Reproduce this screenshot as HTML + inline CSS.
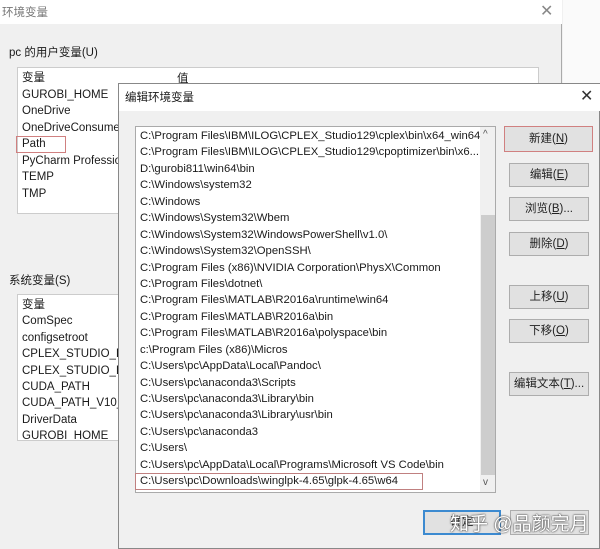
<!DOCTYPE html>
<html><head><meta charset="utf-8"><style>
*{margin:0;padding:0;box-sizing:border-box}
body{width:600px;height:549px;overflow:hidden;background:#f0f0f0;font-family:"Liberation Sans","Noto Sans CJK SC",sans-serif;font-size:11.5px;color:#1a1a1a;position:relative}
.a{position:absolute;white-space:nowrap}
.btn{position:absolute;background:#e1e1e1;border:1px solid #adadad;text-align:center;font-size:11.5px;line-height:22px;color:#222}
</style></head><body>
<div class="a" style="left:0;top:0;width:562px;height:549px;background:#f0f0f0;border-right:1px solid #aaa"></div>
<div class="a" style="left:563px;top:0;width:37px;height:549px;background:#fafafa"></div>
<div class="a" style="left:0;top:0;width:562px;height:24px;background:#fff"></div>
<div class="a" style="left:2px;top:4px;color:#777">环境变量</div>
<div class="a" style="left:540px;top:1px;font-size:16px;color:#888">✕</div>
<div class="a" style="left:9px;top:44px">pc 的用户变量(U)</div>
<div class="a" style="left:17px;top:67px;width:522px;height:147px;background:#fff;border:1px solid #ccc"></div>
<div class="a" style="left:22px;top:70px;line-height:16.5px">变量<br>GUROBI_HOME<br>OneDrive<br>OneDriveConsumer<br>Path<br>PyCharm Profession<br>TEMP<br>TMP</div>
<div class="a" style="left:177px;top:70px">值</div>
<div class="a" style="left:16px;top:136px;width:50px;height:17px;border:1px solid #d08080"></div>
<div class="a" style="left:9px;top:272px">系统变量(S)</div>
<div class="a" style="left:17px;top:294px;width:200px;height:147px;background:#fff;border:1px solid #ccc;overflow:hidden"><div style="padding:2px 0 0 4px;line-height:16.4px">变量<br>ComSpec<br>configsetroot<br>CPLEX_STUDIO_BIN<br>CPLEX_STUDIO_DIR<br>CUDA_PATH<br>CUDA_PATH_V10_2<br>DriverData<br>GUROBI_HOME</div></div>

<div class="a" style="left:118px;top:83px;width:482px;height:466px;background:#f0f0f0;border:1px solid #888"></div>
<div class="a" style="left:119px;top:84px;width:481px;height:27px;background:#fff"></div>
<div class="a" style="left:125px;top:89px">编辑环境变量</div>
<div class="a" style="left:580px;top:86px;font-size:16px;color:#333">✕</div>
<div class="a" style="left:135px;top:126px;width:361px;height:367px;background:#fff;border:1px solid #aaa;overflow:hidden">
<div style="padding:1px 0 0 4px;line-height:16.43px;width:344px;overflow:hidden;font-size:11.3px">C:\Program Files\IBM\ILOG\CPLEX_Studio129\cplex\bin\x64_win64<br>C:\Program Files\IBM\ILOG\CPLEX_Studio129\cpoptimizer\bin\x6...<br>D:\gurobi811\win64\bin<br>C:\Windows\system32<br>C:\Windows<br>C:\Windows\System32\Wbem<br>C:\Windows\System32\WindowsPowerShell\v1.0\<br>C:\Windows\System32\OpenSSH\<br>C:\Program Files (x86)\NVIDIA Corporation\PhysX\Common<br>C:\Program Files\dotnet\<br>C:\Program Files\MATLAB\R2016a\runtime\win64<br>C:\Program Files\MATLAB\R2016a\bin<br>C:\Program Files\MATLAB\R2016a\polyspace\bin<br>c:\Program Files (x86)\Micros<br>C:\Users\pc\AppData\Local\Pandoc\<br>C:\Users\pc\anaconda3\Scripts<br>C:\Users\pc\anaconda3\Library\bin<br>C:\Users\pc\anaconda3\Library\usr\bin<br>C:\Users\pc\anaconda3<br>C:\Users\<br>C:\Users\pc\AppData\Local\Programs\Microsoft VS Code\bin<br>C:\Users\pc\Downloads\winglpk-4.65\glpk-4.65\w64</div>
<div style="position:absolute;left:344px;top:0;width:16px;height:365px;background:#f0f0f0"></div>
<div style="position:absolute;left:345px;top:88px;width:14px;height:260px;background:#cdcdcd"></div>
<div style="position:absolute;left:347px;top:2px;font-size:10px;color:#555">^</div>
<div style="position:absolute;left:347px;top:350px;font-size:10px;color:#555">v</div>
</div>
<div class="a" style="left:135px;top:473px;width:288px;height:17px;border:1px solid #c08080"></div>
<div class="btn" style="left:504px;top:126px;width:89px;height:26px;border-color:#d08080;line-height:24px">新建(<u>N</u>)</div>
<div class="btn" style="left:509px;top:163px;width:80px;height:24px">编辑(<u>E</u>)</div>
<div class="btn" style="left:509px;top:197px;width:80px;height:24px">浏览(<u>B</u>)...</div>
<div class="btn" style="left:509px;top:232px;width:80px;height:24px">删除(<u>D</u>)</div>
<div class="btn" style="left:509px;top:285px;width:80px;height:24px">上移(<u>U</u>)</div>
<div class="btn" style="left:509px;top:319px;width:80px;height:24px">下移(<u>O</u>)</div>
<div class="btn" style="left:509px;top:372px;width:80px;height:24px">编辑文本(<u>T</u>)...</div>
<div class="btn" style="left:423px;top:510px;width:78px;height:25px;border:2px solid #3c8ad0;line-height:21px">确定</div>
<div class="btn" style="left:510px;top:510px;width:79px;height:25px"></div>
<div class="a" style="left:450px;top:509px;font-size:19px;color:#fff;text-shadow:0 0 2px #444,0 0 1px #333">知乎 @品颜完月</div>
</body></html>
